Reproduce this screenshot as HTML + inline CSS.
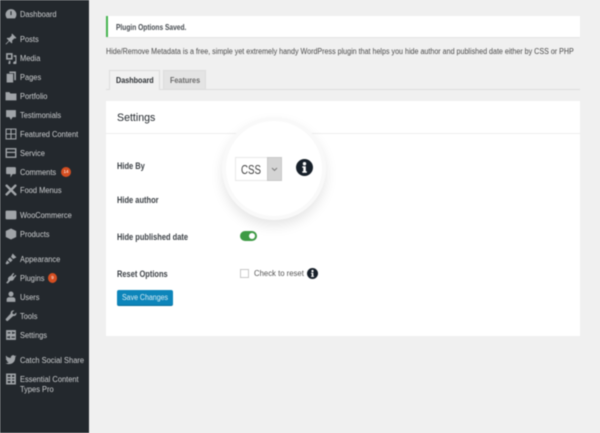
<!DOCTYPE html>
<html><head><meta charset="utf-8">
<style>
html,body{margin:0;padding:0;width:600px;height:433px;overflow:hidden;background:#f0f0f0}
body{font-family:"Liberation Sans",sans-serif;position:relative}
.a{position:absolute;white-space:nowrap}
.s{transform-origin:0 50%}
#w{position:absolute;left:0;top:0;width:600px;height:433px;filter:blur(.4px)}
#side{position:absolute;left:0;top:0;width:89px;height:433px;background:#23282d}
.m{position:absolute;left:20px;font-size:8.6px;line-height:10px;color:#ccced0;white-space:nowrap;transform:scaleX(.87);transform-origin:0 50%}
.i{position:absolute;left:5px;width:12px;height:12px;fill:#a0a4a8}
.l{position:absolute;left:117px;font-size:8.8px;line-height:10px;font-weight:bold;color:#3a3f44;white-space:nowrap;transform:scaleX(.85);transform-origin:0 50%}
.b{position:absolute;border-radius:50%;background:#d54e21;color:#fff;font-size:4.5px;line-height:10px;height:10px;text-align:center}
</style></head><body>
<div id="w">
<div id="side">
<svg class="i" style="top:8px" viewBox="0 0 11 11"><path d="M5.500 1a5 5 0 0 0-5 5c0 1.300.5 2.500 1.300 3.500h7.400A5 5 0 0 0 10.500 6a5 5 0 0 0-5-5zM5 3h1v3.500H5z" fill-rule="evenodd"/></svg>
<div class="m" style="top:9px">Dashboard</div>
<svg class="i" style="top:33px" viewBox="0 0 11 11"><path d="M6.500.5l4 4-1 .6-.8-.3L6.500 7l.2 1.800-.7.700L4 7.500 1 10.500 .5 10l3-3-2-2 .7-.7L4 4.500 6.200 2.300 5.900 1.500z"/></svg>
<div class="m" style="top:34px">Posts</div>
<svg class="i" style="top:52px" viewBox="0 0 11 11"><path d="M1 1h6v6H1zM2.500 2.500v3h3v-3zM8 3h2.500v7a1.500 1.500 0 1 1-1-1.400V4.500H8zM3 8h2v2a1 1 0 1 1-1-.9z" fill-rule="evenodd"/></svg>
<div class="m" style="top:53px">Media</div>
<svg class="i" style="top:71px" viewBox="0 0 11 11"><path d="M4 .5h6v8H8.500V2H4zM1.500 2.500H7.500v8h-6z"/></svg>
<div class="m" style="top:72px">Pages</div>
<svg class="i" style="top:90px" viewBox="0 0 11 11"><path d="M.5 2h3.500l1 1.200h5.500v6.300H.5z"/></svg>
<div class="m" style="top:91px">Portfolio</div>
<svg class="i" style="top:109px" viewBox="0 0 11 11"><path d="M1 1h9v6.500H7L5.500 10 4 7.500H1z"/></svg>
<div class="m" style="top:110px">Testimonials</div>
<svg class="i" style="top:128px" viewBox="0 0 11 11"><path d="M.5.500h10v10H.5zM1.500 1.500V5h3.500V1.500zM6 1.500V5h3.500V1.500zM1.500 6v3.500H5V6zM6 6v3.500h3.500V6z" fill-rule="evenodd"/></svg>
<div class="m" style="top:129px">Featured Content</div>
<svg class="i" style="top:147px" viewBox="0 0 11 11"><path d="M.5 1h10v9H.5zM1.800 2.300v2h7.400v-2zM1.800 5.500v3.200h7.400V5.500z" fill-rule="evenodd"/></svg>
<div class="m" style="top:148px">Service</div>
<svg class="i" style="top:166px" viewBox="0 0 11 11"><path d="M2 1h7a1 1 0 0 1 1 1v4.500a1 1 0 0 1-1 1H7L5 10.500V7.500H2a1 1 0 0 1-1-1V2a1 1 0 0 1 1-1z"/></svg>
<div class="m" style="top:167px">Comments</div>
<div class="b" style="left:61px;top:167px;width:10px">14</div>
<svg class="i" style="top:184px" viewBox="0 0 11 11"><path d="M1.500 1.500l8 8M9.500 1.500l-8 8" stroke="#a0a4a8" stroke-width="2.200" stroke-linecap="round"/></svg>
<div class="m" style="top:185px">Food Menus</div>
<svg class="i" style="top:209px" viewBox="0 0 11 11"><path d="M1.500 1.500h8a1 1 0 0 1 1 1v6a1 1 0 0 1-1 1h-8a1 1 0 0 1-1-1v-6a1 1 0 0 1 1-1z"/></svg>
<div class="m" style="top:210px">WooCommerce</div>
<svg class="i" style="top:228px" viewBox="0 0 11 11"><path d="M5.500.5l4.800 2.300v5.400L5.500 10.500.7 8.200V2.800z"/></svg>
<div class="m" style="top:229px">Products</div>
<svg class="i" style="top:253px" viewBox="0 0 11 11"><path d="M7 .5l3.500 3.500-3 1.500-2-2zM4.500 4l2.500 2.500-2 2L2.500 6zM2 6.800l2.200 2.200-2.700 1.500-1-1z"/></svg>
<div class="m" style="top:254px">Appearance</div>
<svg class="i" style="top:272px" viewBox="0 0 11 11"><path d="M7.500.8l1 .7-1.600 2 1 .8 1.700-1.800.9.800-2 2.400c-.6 2-2 2.700-3.500 2.200L2.500 10.500 1 10l2-2.600C2.200 6 3 4.500 5.300 3.500z"/></svg>
<div class="m" style="top:273px">Plugins</div>
<div class="b" style="left:48px;top:273px;width:9px">9</div>
<svg class="i" style="top:291px" viewBox="0 0 11 11"><path d="M5.500.5a2.300 2.300 0 1 1 0 4.600 2.300 2.300 0 0 1 0-4.600zM1.500 10V7.500c0-1 1-1.800 2.300-1.800h3.400c1.300 0 2.300.8 2.300 1.800V10z"/></svg>
<div class="m" style="top:292px">Users</div>
<svg class="i" style="top:310px" viewBox="0 0 11 11"><path d="M10.300 2.300L8.500 4 7 3.500 6.800 2 8.600.5C7-.2 5 1 5.200 3.200L.8 8c-.8 1 .9 2.700 1.900 1.800L7.500 5.500c2.300.3 3.500-1.700 2.800-3.200z"/></svg>
<div class="m" style="top:311px">Tools</div>
<svg class="i" style="top:329px" viewBox="0 0 11 11"><path d="M1 1h9v9H1zM2.500 3v1H5V3zM6.500 2.500v2h1V4H9V3H7.500v-.5zM2 7v1h1.500v.5h1v-2h-1V7zM6 7v1h3V7z" fill-rule="evenodd"/></svg>
<div class="m" style="top:330px">Settings</div>
<svg class="i" style="top:354px" viewBox="0 0 11 11"><path d="M10.500 2.200c-.4.200-.8.300-1.200.3.400-.3.800-.7 1-1.200-.4.200-.9.400-1.300.5a2.100 2.100 0 0 0-3.600 1.900C3.500 3.600 2 2.800 1 1.500c-.5 1-.2 2.200.7 2.800-.3 0-.7-.1-1-.3 0 1 .7 1.900 1.700 2.100-.3.100-.6.100-.9 0 .3.900 1.100 1.500 2 1.500-.9.700-2 1-3 .9 3 1.800 9 .8 8.900-5.500.4-.3.800-.6 1.100-.8z"/></svg>
<div class="m" style="top:355px">Catch Social Share</div>
<svg class="i" style="top:373px" viewBox="0 0 11 11"><path d="M1 .5h9v10H1zM2.500 2v1.500H5V2zM6.500 2v1.500h2V2zM2.500 5v1h2.500V5zM6.500 5v1h2V5zM2.500 7.500V9H5V7.500zM6.500 7.500V9h2V7.500z" fill-rule="evenodd"/></svg>
<div class="m" style="top:374px">Essential Content</div>
<div class="m" style="top:384px">Types Pro</div>
</div>

<!-- notice -->
<div class="a" style="left:106px;top:16px;width:474px;height:21px;background:#fff;box-shadow:0 1px 1px rgba(0,0,0,.05)"></div>
<div class="a" style="left:106px;top:16px;width:2px;height:21px;background:#46b450"></div>
<div class="a s" style="left:116px;top:23px;font-size:8.2px;line-height:9px;font-weight:bold;color:#454a4f;transform:scaleX(.81)">Plugin Options Saved.</div>
<div class="a s" style="left:106px;top:47px;font-size:8px;line-height:10px;color:#4a4a4a;transform:scaleX(.891)">Hide/Remove Metadata is a free, simple yet extremely handy WordPress plugin that helps you hide author and published date either by CSS or PHP</div>

<!-- tabs -->
<div class="a" style="left:106px;top:89px;width:474px;height:1px;background:#ddd"></div>
<div class="a" style="left:109px;top:70px;width:51px;height:20px;background:#f1f1f1;border:1px solid #ddd;border-bottom:0;box-sizing:border-box"></div>
<div class="a s" style="left:116px;top:75px;font-size:8.6px;line-height:10px;font-weight:bold;color:#2b2f33;transform:scaleX(.84)">Dashboard</div>
<div class="a" style="left:163px;top:70px;width:43px;height:19px;background:#e4e4e4;border:1px solid #ddd;border-bottom:0;box-sizing:border-box"></div>
<div class="a s" style="left:170px;top:75px;font-size:8.6px;line-height:10px;font-weight:bold;color:#6a6a6a;transform:scaleX(.84)">Features</div>

<!-- panel -->
<div class="a" style="left:106px;top:101px;width:474px;height:235px;background:#fff"></div>
<div class="a" style="left:106px;top:133px;width:474px;height:1px;background:#eee"></div>
<div class="a" style="left:117px;top:112px;font-size:10.6px;line-height:13px;color:#23282d">Settings</div>

<div class="l" style="top:161px">Hide By</div>
<div class="l" style="top:195px">Hide author</div>
<div class="l" style="top:232px">Hide published date</div>
<div class="l" style="top:269px">Reset Options</div>

<!-- magnifier -->
<div class="a" style="left:222px;top:117px;width:104px;height:103px;border-radius:50%;background:#fff;box-sizing:border-box;border:4px solid #f9f9f9;box-shadow:0 6px 12px rgba(0,0,0,.1)"></div>
<div class="a" style="left:235px;top:157px;width:47px;height:24px;background:#fff;border:1px solid #e8e8e8;box-sizing:border-box"></div>
<div class="a s" style="left:241px;top:162px;font-size:13px;line-height:16px;color:#444;transform:scaleX(.75)">CSS</div>
<div class="a" style="left:267px;top:157px;width:15px;height:24px;background:#d4d4d4;border:1px solid #c8c8c8;box-sizing:border-box"></div>
<svg class="a" style="left:271px;top:167px;width:7px;height:5px" viewBox="0 0 7 5"><path d="M1 1l2.500 2.500L6 1" fill="none" stroke="#777" stroke-width=".9"/></svg>
<svg class="a" style="left:296px;top:159px;width:17px;height:17px" viewBox="0 0 17 17"><circle cx="8.500" cy="8.500" r="8.500" fill="#17202a"/><circle cx="8.500" cy="4.700" r="1.700" fill="#fff"/><path d="M6.300 7.300h3.500v5h1v1.500H6.300v-1.500h1v-3.500h-1z" fill="#fff"/></svg>

<!-- toggle -->
<div class="a" style="left:240px;top:231px;width:17px;height:10px;border-radius:5px;background:#3d9a44"></div>
<div class="a" style="left:249px;top:233px;width:6px;height:6px;border-radius:50%;background:#fff"></div>

<!-- reset -->
<div class="a" style="left:240px;top:269px;width:9px;height:9px;box-sizing:border-box;background:#fff;border:1px solid #c8c8c8"></div>
<div class="a s" style="left:254px;top:268px;font-size:8.6px;line-height:10px;color:#555;transform:scaleX(.9)">Check to reset</div>
<svg class="a" style="left:307px;top:268px;width:11px;height:11px" viewBox="0 0 17 17"><circle cx="8.500" cy="8.500" r="8.500" fill="#17202a"/><circle cx="8.500" cy="4.700" r="1.800" fill="#fff"/><path d="M6.300 7.300h3.500v5h1v1.500H6.300v-1.500h1v-3.500h-1z" fill="#fff"/></svg>

<!-- button -->
<div class="a" style="left:117px;top:290px;width:56px;height:16px;background:#0d85ba;border-radius:2px;border-bottom:1px solid #0a6f9c;box-sizing:border-box"></div>
<div class="a" style="left:117px;top:293px;width:56px;text-align:center;font-size:7.8px;line-height:10px;color:#d8edf6;transform:scaleX(.9);transform-origin:50% 50%">Save Changes</div>
</div>
</body></html>
